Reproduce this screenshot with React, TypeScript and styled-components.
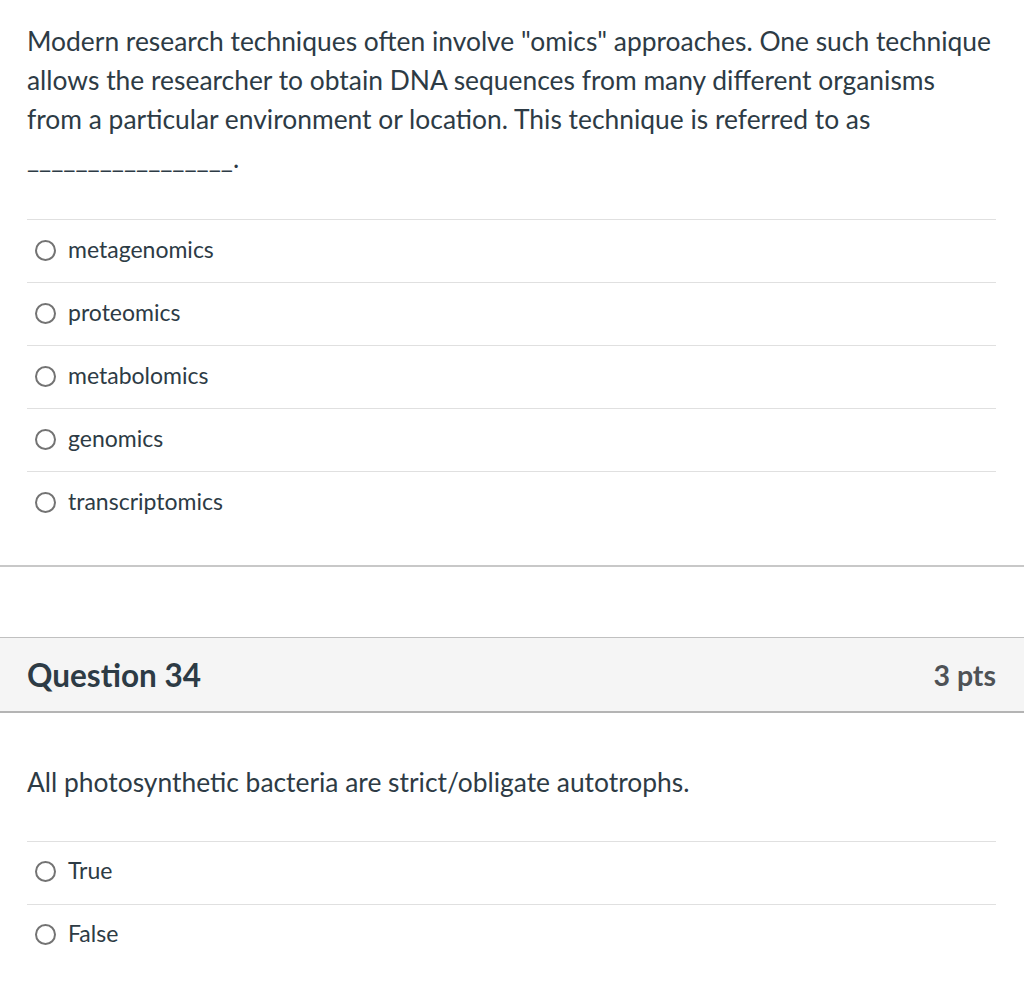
import styled, { createGlobalStyle } from 'styled-components';

const GlobalStyle = createGlobalStyle`
  html, body {
    margin: 0;
    padding: 0;
    background: #fff;
  }
  body {
    font-family: Lato, 'Open Sans', 'Liberation Sans', sans-serif;
    color: #2d3b45;
  }
`;

const Page = styled.div`
  width: 1024px;
  height: 994px;
  overflow: hidden;
`;

const QuestionBlock = styled.section`
  padding: 22px 10px 31px 27px;
  border-bottom: 2px solid #c8c8c8;
`;

const Spacer = styled.div`
  height: 70px;
`;

const Header = styled.header`
  display: flex;
  align-items: center;
  justify-content: space-between;
  height: 76px;
  padding: 0 28px 0 27px;
  background: #f5f5f5;
  border-top: 1px solid #c0c0c0;
  border-bottom: 2px solid #b4b4b4;
  box-sizing: border-box;
`;

const Title = styled.h2`
  margin: 0;
  font-size: 31.5px;
  font-weight: 700;
  color: #2d3b45;
`;

const Points = styled.span`
  font-size: 28.5px;
  font-weight: 700;
  color: #4e5256;
`;

const QuestionText = styled.p`
  margin: 0;
  font-size: 26.4px;
  line-height: 39px;
  white-space: nowrap;
  color: #2d3b45;
`;

const Body = styled.section`
  padding: ${({ $top }) => $top || '0'} 10px 0 27px;
`;

const Answers = styled.ul`
  list-style: none;
  margin: ${({ $gap }) => $gap || '41px'} 18px 0 0;
  padding: 0;
`;

const Answer = styled.li`
  display: flex;
  align-items: center;
  height: 63px;
  box-sizing: border-box;
  padding-bottom: ${({ $lift }) => $lift || '4px'};
  border-top: 1px solid #e0e0e0;
`;

const Radio = styled.span`
  width: 21px;
  height: 21px;
  margin: 2px 12px 0 8px;
  border: 2px solid #737373;
  border-radius: 50%;
  box-sizing: border-box;
  flex-shrink: 0;
`;

const AnswerLabel = styled.span`
  font-size: 23px;
  color: #2d3b45;
`;

const firstOptions = [
  'metagenomics',
  'proteomics',
  'metabolomics',
  'genomics',
  'transcriptomics',
];

const secondOptions = ['True', 'False'];

function App(): JSX.Element {
  return (
    <Page>
      <GlobalStyle />
      <QuestionBlock>
        <QuestionText>
          Modern research techniques often involve "omics" approaches. One such technique
          <br />
          allows the researcher to obtain DNA sequences from many different organisms
          <br />
          from a particular environment or location. This technique is referred to as
          <br />
          _________________.
        </QuestionText>
        <Answers>
          {firstOptions.map((option) => (
            <Answer key={option}>
              <Radio />
              <AnswerLabel>{option}</AnswerLabel>
            </Answer>
          ))}
        </Answers>
      </QuestionBlock>
      <Spacer />
      <Header>
        <Title>Question 34</Title>
        <Points>3 pts</Points>
      </Header>
      <Body $top="50px">
        <QuestionText>
          All photosynthetic bacteria are strict/obligate autotrophs.
        </QuestionText>
        <Answers $gap="39px">
          {secondOptions.map((option) => (
            <Answer key={option} $lift="6px">
              <Radio />
              <AnswerLabel>{option}</AnswerLabel>
            </Answer>
          ))}
        </Answers>
      </Body>
    </Page>
  );
}

export default App;
